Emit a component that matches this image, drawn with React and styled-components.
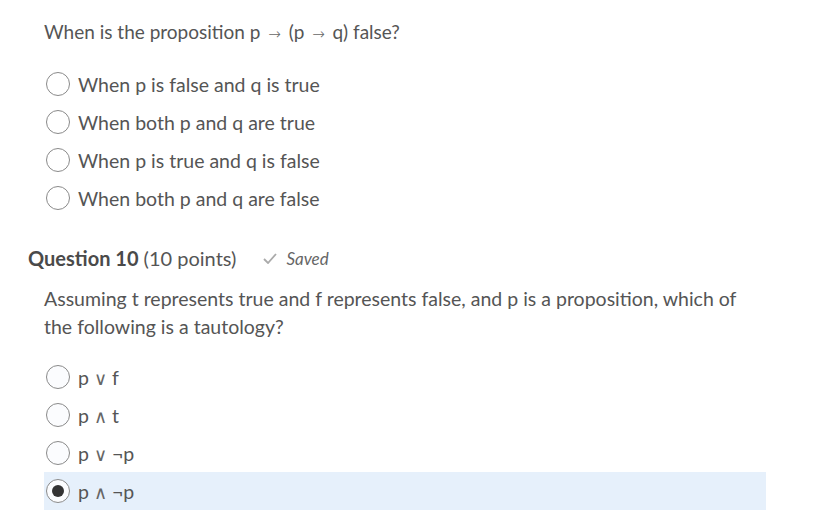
import React from "react";
import styled, { createGlobalStyle } from "styled-components";

const Global = createGlobalStyle`
  html, body { margin: 0; padding: 0; background: #fff; }
  body { font-family: Lato, "Open Sans", sans-serif; color: #555; }
`;

const Page = styled.div`
  width: 830px;
  padding: 19px 0 0 28px;
  box-sizing: border-box;
`;

const Block = styled.div`
  padding-left: 16px;
  width: 722px;
`;

const Prompt = styled.div`
  font-size: ${(p) => p.$fs || 19}px;
  line-height: ${(p) => p.$lh || 26}px;
  max-width: ${(p) => p.$mw || 722}px;
  color: #555;
`;

const Sym = styled.span`
  font-family: "DejaVu Sans", sans-serif;
  font-size: ${(p) => p.$fs || 15}px;
  font-weight: 200;
  margin: 0 ${(p) => p.$pad || 0}px;
  color: #666;
`;

const List = styled.div`
  display: flex;
  flex-direction: column;
  margin-top: ${(p) => p.$mt}px;
`;

const Row = styled.label`
  display: flex;
  align-items: center;
  gap: 8px;
  height: 38px;
  padding-left: 2px;
  background: ${(p) => (p.$selected ? "#e6f0fb" : "transparent")};
  font-size: 19.5px;
  color: #555;
`;

const Radio = styled.span`
  width: 22px;
  height: 22px;
  border-radius: 50%;
  border: 1px solid #8a8a8a;
  background: ${(p) => (p.$soft ? "#fbfcfe" : "#fff")};
  display: flex;
  align-items: center;
  justify-content: center;
  flex-shrink: 0;
`;

const Dot = styled.span`
  width: 12px;
  height: 12px;
  border-radius: 50%;
  background: #333;
`;

const Header = styled.div`
  display: flex;
  align-items: center;
  margin-top: 28px;
  height: 26px;
  font-size: 20px;
  color: #555;
`;

const Strong = styled.span`
  font-weight: 700;
  color: #4a4a4a;
`;

const Saved = styled.span`
  display: flex;
  align-items: center;
  gap: 9px;
  margin-left: 27px;
  font-size: 17px;
  font-style: italic;
  color: #666;
`;

const Spacer = styled.div`
  height: ${(p) => p.$h}px;
`;

const Arrow = () => <Sym $pad={3} $fs={15}>→</Sym>;

const q1 = [
  "When p is false and q is true",
  "When both p and q are true",
  "When p is true and q is false",
  "When both p and q are false",
];

const q2 = [
  ["p ", "∨", " f"],
  ["p ", "∧", " t"],
  ["p ", "∨", " ¬p"],
  ["p ", "∧", " ¬p"],
];

export default function App() {
  return (
    <Page>
      <Global />
      <Block>
        <Prompt>
          When is the proposition p <Arrow /> (p <Arrow /> q) false?
        </Prompt>
        <List $mt={18}>
          {q1.map((t) => (
            <Row key={t}>
              <Radio />
              {t}
            </Row>
          ))}
        </List>
      </Block>
      <Header>
        <Strong>Question 10</Strong>&nbsp;(10 points)
        <Saved>
          <svg width="14" height="11" viewBox="0 0 14 11">
            <path d="M1 6 L5 10 L13 1" fill="none" stroke="#aaa" strokeWidth="1.8" />
          </svg>
          Saved
        </Saved>
      </Header>
      <Spacer $h={14} />
      <Block>
        <Prompt $lh={28} $mw={712} $fs={19.5}>
          Assuming t represents true and f represents false, and p is a proposition, which of the following is a tautology?
        </Prompt>
        <List $mt={17}>
          {q2.map((t, i) => (
            <Row key={i} $selected={i === 3}>
              <Radio $soft>{i === 3 && <Dot />}</Radio>
              <span>
                {t[0]}
                <Sym $fs={18}>{t[1]}</Sym>
                {t[2]}
              </span>
            </Row>
          ))}
        </List>
      </Block>
    </Page>
  );
}
